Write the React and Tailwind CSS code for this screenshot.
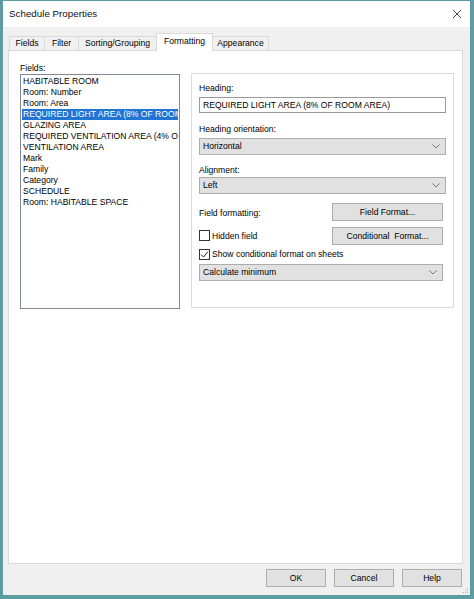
import React from 'react';

const fields = [
    'HABITABLE ROOM',
    'Room: Number',
    'Room: Area',
    'REQUIRED LIGHT AREA (8% OF ROOM AREA)',
    'GLAZING AREA',
    'REQUIRED VENTILATION AREA (4% OF ROOM AREA)',
    'VENTILATION AREA',
    'Mark',
    'Family',
    'Category',
    'SCHEDULE',
    'Room: HABITABLE SPACE',
];

const tabs = [
    { label: 'Fields', w: 'w-[36px]' },
    { label: 'Filter', w: 'w-[35px]' },
    { label: 'Sorting/Grouping', w: 'w-[79px]' },
    { label: 'Formatting', w: 'w-[57px]', active: true },
    { label: 'Appearance', w: 'w-[57px]' },
];

const Chevron = () => (
    <svg width="8" height="5" viewBox="0 0 8 5">
        <path d="M0.5 0.5 L4 4 L7.5 0.5" fill="none" stroke="#6b6b6b" strokeWidth="0.9" />
    </svg>
);

const Select = ({ value, className = '' }) => (
    <div className={`h-[17px] border border-[#adadad] bg-[#e1e1e1] flex items-center justify-between pl-[3px] pr-[5px] ${className}`}>
        <span>{value}</span>
        <Chevron />
    </div>
);

const Button = ({ children, className = '' }) => (
    <div className={`h-[18px] border border-[#adadad] bg-[#e1e1e1] flex items-center justify-center ${className}`}>
        {children}
    </div>
);

const Checkbox = ({ checked }) => (
    <div className="w-[11px] h-[11px] border border-[#333] bg-white flex items-center justify-center">
        {checked && (
            <svg width="9" height="9" viewBox="0 0 9 9">
                <path d="M1.2 4.6 L3.5 7 L7.8 1.8" fill="none" stroke="#222" strokeWidth="1" />
            </svg>
        )}
    </div>
);

const App = () => {
    return (
        <div className="w-[474px] h-[599px] bg-[#5f9ca1] pl-[3px] pr-[4px] pt-px pb-[4px] font-['Liberation_Sans',Arial,sans-serif] text-[8.6px] text-black">
            <div className="relative w-full h-full bg-[#f0f0f0] flex flex-col">
                {/* Title bar */}
                <div className="h-[26px] bg-white flex items-center justify-between pl-[6px] pr-[8px]">
                    <span className="text-[9.8px] text-[#111]">Schedule Properties</span>
                    <svg width="10" height="10" viewBox="0 0 10 10">
                        <path d="M1 1 L9 9 M9 1 L1 9" stroke="#333" strokeWidth="0.9" />
                    </svg>
                </div>

                {/* Tabs */}
                <div className="pt-[6px] pl-[6px] flex items-end h-[23px]">
                    {tabs.map(t => (
                        <div
                            key={t.label}
                            className={`${t.w} -ml-px first:ml-0 flex items-center justify-center border border-b-0 border-[#d9d9d9] ${
                                t.active ? 'h-[18px] bg-white relative z-10 -mb-px pb-[2px]' : 'h-[14px] bg-[#f0f0f0]'
                            }`}
                        >
                            {t.label}
                        </div>
                    ))}
                </div>

                {/* Panel */}
                <div className="mx-[5px] mr-[7px] h-[514px] bg-white border border-[#d9d9d9] pt-[11px] pl-[11px] pr-[8px] flex gap-[11px]">
                    <div className="w-[160px] flex flex-col">
                        <div className="h-[12px] leading-[12px]">Fields:</div>
                        <div className="h-[235px] border border-[#828790] p-px">
                            {fields.map((f, i) => (
                                <div
                                    key={f}
                                    className={`h-[11px] leading-[11px] pl-[1px] whitespace-nowrap overflow-hidden ${
                                        i === 3 ? 'bg-[#1f74d4] text-white' : ''
                                    }`}
                                >
                                    {f}
                                </div>
                            ))}
                        </div>
                    </div>

                    <div className="flex-1 mt-[11px] h-[235px] border border-[#dcdcdc] pt-[8px] px-[7px]">
                        <div className="h-[12px] leading-[12px]">Heading:</div>
                        <div className="mt-[3px] h-[16px] border border-[#9a9a9a] bg-white flex items-center pl-[3px]">
                            REQUIRED LIGHT AREA (8% OF ROOM AREA)
                        </div>

                        <div className="mt-[10px] h-[12px] leading-[12px]">Heading orientation:</div>
                        <Select value="Horizontal" className="mt-[3px]" />

                        <div className="mt-[9px] h-[12px] leading-[12px]">Alignment:</div>
                        <Select value="Left" className="mt-[1px]" />

                        <div className="mt-[9px] flex items-center justify-between pr-[3px]">
                            <span className="mt-[2px]">Field formatting:</span>
                            <Button className="w-[111px]">Field Format...</Button>
                        </div>
                        <div className="mt-[6px] flex items-center justify-between pr-[3px]">
                            <div className="flex items-center gap-[2px]">
                                <Checkbox />
                                <span>Hidden field</span>
                            </div>
                            <Button className="w-[111px]">Conditional&nbsp; Format...</Button>
                        </div>
                        <div className="mt-[3px] h-[12px] flex items-center gap-[2px]">
                            <Checkbox checked />
                            <span>Show conditional format on sheets</span>
                        </div>
                        <Select value="Calculate minimum" className="mt-[4px] mr-[3px]" />
                    </div>
                </div>

                {/* Bottom buttons */}
                <div className="pt-[5px] pr-[8px] flex justify-end gap-[8px]">
                    <Button className="w-[60px] border-[#2a78cf]">OK</Button>
                    <Button className="w-[60px]">Cancel</Button>
                    <Button className="w-[60px]">Help</Button>
                </div>

                {/* Resize grip */}
                <svg className="absolute right-px bottom-px" width="7" height="7" viewBox="0 0 7 7">
                    <rect x="5" y="1" width="1" height="1" fill="#b5b5b5" />
                    <rect x="3" y="3" width="1" height="1" fill="#b5b5b5" />
                    <rect x="5" y="3" width="1" height="1" fill="#b5b5b5" />
                    <rect x="1" y="5" width="1" height="1" fill="#b5b5b5" />
                    <rect x="3" y="5" width="1" height="1" fill="#b5b5b5" />
                    <rect x="5" y="5" width="1" height="1" fill="#b5b5b5" />
                </svg>
            </div>
        </div>
    );
};

export default App;
